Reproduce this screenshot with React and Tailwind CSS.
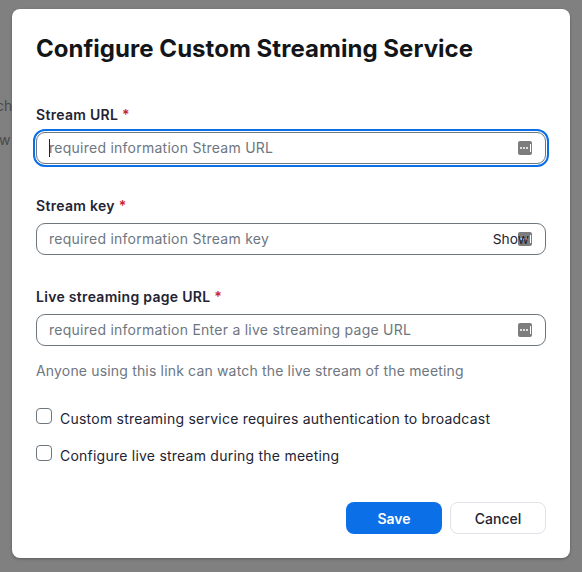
const font = { fontFamily: "Inter, 'Liberation Sans', sans-serif" };

function Dots() {
  return (
    <span className="absolute right-[13px] top-1/2 -translate-y-1/2 w-[14px] h-[14px] rounded-[2px] bg-[#7d7d7d] flex items-center pl-[2px] gap-[1px] overflow-hidden">
      <span className="w-[2px] h-[2px] rounded-full bg-white" />
      <span className="w-[2px] h-[2px] rounded-full bg-white" />
      <span className="w-[2px] h-[2px] rounded-full bg-white" />
      <span className="ml-[1px] w-[1px] h-[8px] bg-white" />
    </span>
  );
}

function Field({ label, placeholder, focused, show, hint }) {
  return (
    <div className="flex flex-col">
      <div className="text-[14px] leading-[20px] font-semibold text-[#232333] tracking-[0.3px]">
        {label} <span className="text-[#c8232c]">*</span>
      </div>
      <div
        className={
          "relative mt-[7px] h-[32px] rounded-[9px] border border-[#6e7680] bg-white flex items-center pl-[12px] pb-[1px] text-[14px] text-[#6e7680] tracking-[0.25px] " +
          (focused ? "outline-2 outline-offset-1 outline-[#0b6fe8]" : "")
        }
      >
        {focused && <span className="absolute left-[12px] top-[6px] w-px h-[18px] bg-[#232333]" />}
        {placeholder}
        <Dots />
        {show && <span className="absolute right-[16px] top-[5px] text-[13.75px] leading-[20px] text-[#232333] tracking-normal">Show</span>}
      </div>
      {hint && <div className="mt-[15px] text-[14px] leading-[20px] text-[#6e7680] tracking-[0.17px]">{hint}</div>}
    </div>
  );
}

function Check({ children }) {
  return (
    <label className="flex items-start gap-[8px] text-[14px] leading-[20px] text-[#232333] tracking-[0.23px]">
      <span className="mt-[-1px] w-[16px] h-[16px] rounded-[4px] border border-[#6e7680] bg-white shrink-0" />
      <span>{children}</span>
    </label>
  );
}

export default function App() {
  return (
    <div className="relative w-[582px] h-[572px] bg-[#808080] overflow-hidden" style={font}>
      <div className="absolute left-[-4px] top-[96px] text-[14px] leading-[20px] text-[#4a4a4a]">ch</div>
      <div className="absolute left-[-1px] top-[130px] text-[14px] leading-[20px] text-[#4a4a4a]">w</div>
      <div className="absolute left-[12px] top-[9px] w-[558px] h-[549px] bg-white rounded-[8px] shadow-[0_1px_3px_rgba(0,0,0,0.3)] flex flex-col px-[24px] pt-[24px] pb-[24px]">
        <h1 className="text-[24px] leading-[32px] font-bold text-[#131619] tracking-[0.04px]">Configure Custom Streaming Service</h1>
        <div className="mt-[40px] flex flex-col gap-[32px]">
          <Field label="Stream URL" placeholder="required information Stream URL" focused />
          <Field label="Stream key" placeholder="required information Stream key" show />
          <Field label="Live streaming page URL" placeholder="required information Enter a live streaming page URL" hint="Anyone using this link can watch the live stream of the meeting" />
        </div>
        <div className="mt-[28px] flex flex-col gap-[17px]">
          <Check>Custom streaming service requires authentication to broadcast</Check>
          <Check>Configure live stream during the meeting</Check>
        </div>
        <div className="mt-auto flex justify-end gap-[8px]">
          <button className="w-[96px] h-[32px] rounded-[8px] bg-[#0b6fe8] text-white text-[14px] font-semibold">Save</button>
          <button className="w-[96px] h-[32px] rounded-[8px] bg-white border border-[#dfe3e8] text-[#232333] text-[14px] font-medium">Cancel</button>
        </div>
      </div>
    </div>
  );
}
